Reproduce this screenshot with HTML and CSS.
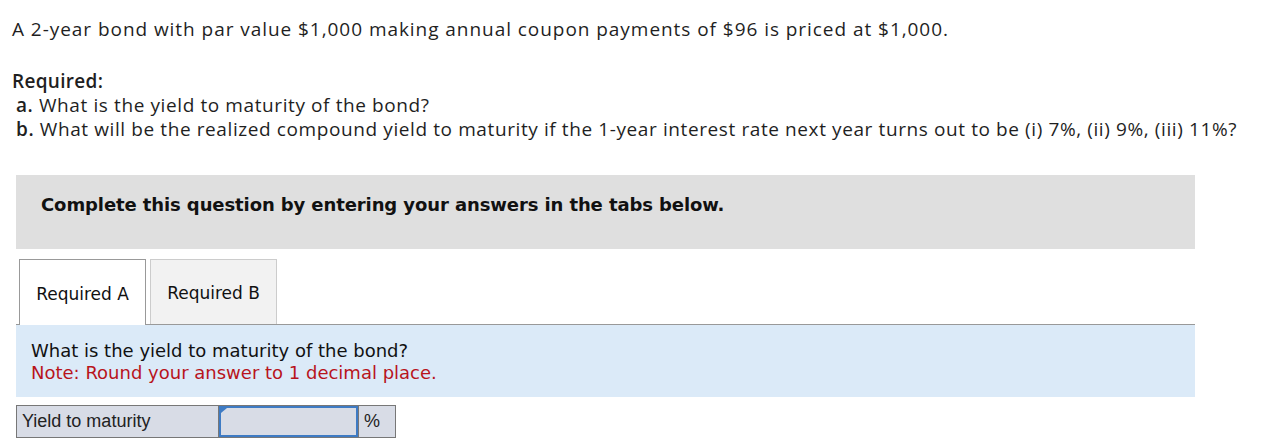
FILE: index.html
```html
<!DOCTYPE html>
<html lang="en">
<head>
    <meta charset="UTF-8" />
    <title>Bond yield question</title>
    <link rel="stylesheet" href="styles.css">
</head>
<body>

<div class="question">
    <p class="intro">A 2-year bond with par value $1,000 making annual coupon payments of $96 is priced at $1,000.</p>
    <p class="req-title">Required:</p>
    <p class="req-item"><b>a.</b> What is the yield to maturity of the bond?</p>
    <p class="req-item"><b>b.</b> What will be the realized compound yield to maturity if the 1-year interest rate next year turns out to be (i) 7%, (ii) 9%, (iii) 11%?</p>
</div>

<div class="banner">Complete this question by entering your answers in the tabs below.</div>

<div class="tabs">
    <div class="tab active">Required A</div>
    <div class="tab">Required B</div>
</div>

<div class="panel">
    <p>What is the yield to maturity of the bond?</p>
    <p class="note">Note: Round your answer to 1 decimal place.</p>
</div>

<table class="answer">
    <tr>
        <td class="label">Yield to maturity</td>
        <td class="input-cell"><span class="flag"></span></td>
        <td class="unit">%</td>
    </tr>
</table>

</body>
</html>
```

FILE: styles.css
```css
body {
    margin: 0;
    padding: 0 0 0 12px;
    font-family: "Open Sans", Lato, sans-serif;
    color: #1f1f1f;
    background: #fff;
}

p {
    margin: 0;
}

.question {
    font-size: 19px;
    letter-spacing: 0.6px;
    padding-top: 17px;
}

.intro {
    line-height: 24px;
    letter-spacing: 0.95px;
}

.req-title {
    font-weight: 600;
    letter-spacing: 0.3px;
    margin-top: 28px;
    line-height: 24px;
}

.req-item {
    padding-left: 4px;
    line-height: 24px;
}

.req-item b {
    font-weight: 600;
}

.banner {
    margin: 34px 0 0 4px;
    width: 1179px;
    height: 74px;
    box-sizing: border-box;
    padding: 18px 0 0 25px;
    background: #dfdfdf;
    font-family: "DejaVu Sans", Verdana, sans-serif;
    font-weight: bold;
    font-size: 18px;
    letter-spacing: -0.1px;
    line-height: 24px;
    color: #111;
}

.tabs {
    display: flex;
    gap: 4px;
    margin: 10px 0 0 4px;
    width: 1179px;
    border-bottom: 1px solid #999;
    padding-left: 3px;
    box-sizing: border-box;
}

.tab {
    width: 127px;
    height: 65px;
    box-sizing: border-box;
    padding-top: 2px;
    border: 1px solid #ccc;
    border-bottom: none;
    background: #f2f2f2;
    font-family: "DejaVu Sans", Verdana, sans-serif;
    font-size: 17px;
    display: flex;
    align-items: center;
    justify-content: center;
    color: #111;
}

.tab.active {
    background: #fff;
    border-color: #999;
    margin-bottom: -1px;
    height: 66px;
}

.panel {
    margin-left: 4px;
    width: 1179px;
    height: 72px;
    box-sizing: border-box;
    padding: 15px 0 0 15px;
    background: #dbeaf8;
    font-family: "DejaVu Sans", Verdana, sans-serif;
    font-size: 18px;
    line-height: 22px;
    color: #111;
}

.panel .note {
    color: #b8141c;
}

.answer {
    margin: 8px 0 0 4px;
    border-collapse: collapse;
    font-family: "Liberation Sans", Arial, sans-serif;
    font-size: 18px;
    color: #222;
}

.answer td {
    border: 1px solid #777;
    background: #d8dce6;
    height: 31px;
    padding: 0;
}

.answer .label {
    width: 196px;
    padding-left: 5px;
}

.answer .input-cell {
    width: 139px;
    position: relative;
    box-shadow: inset 0 0 0 2px #3e7bc4;
}

.flag {
    position: absolute;
    left: 2px;
    top: 2px;
    width: 0;
    height: 0;
    border-bottom: 5px solid transparent;
    border-left: 6px solid #3e7bc4;
}

.answer .unit {
    width: 31px;
    padding-left: 5px;
}
```
